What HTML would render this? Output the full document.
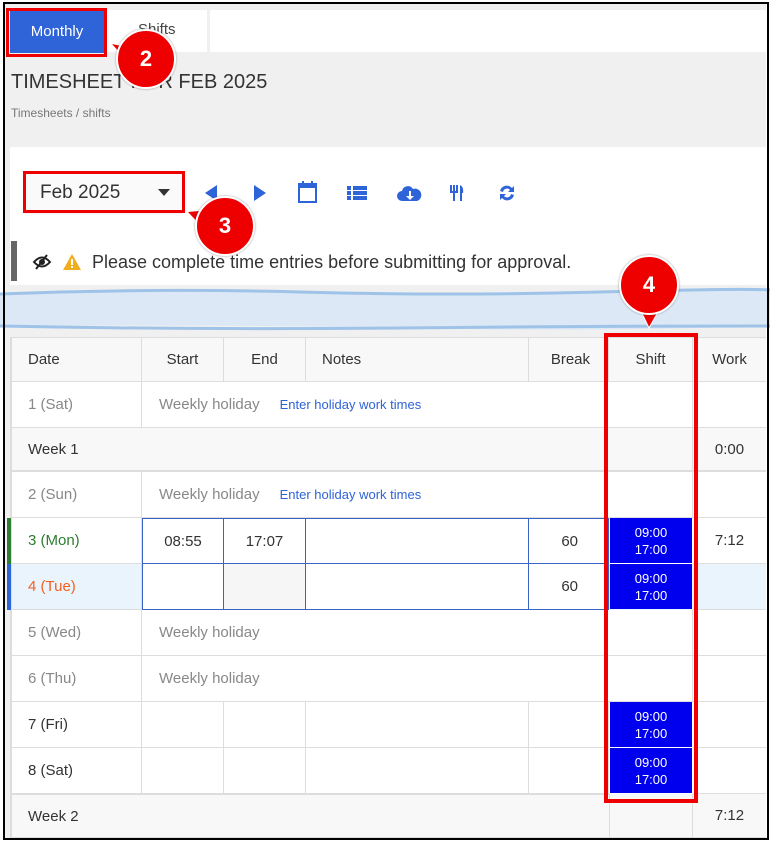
<!DOCTYPE html>
<html><head><meta charset="utf-8"><style>
*{margin:0;padding:0;box-sizing:border-box}
body{width:770px;height:841px;position:relative;overflow:hidden;background:#fff;font-family:"Liberation Sans",sans-serif;}
.a{position:absolute}
.cell{position:absolute;border-right:1px solid #ddd;border-bottom:1px solid #ddd;display:flex;align-items:center;font-size:15px;color:#333}
.mk{position:absolute;width:60px;height:60px;border-radius:50%;background:#e00;border:2px solid #fff;color:#fff;font-weight:bold;font-size:22px;display:flex;align-items:center;justify-content:center;box-shadow:0 0 2px rgba(0,0,0,.4)}
.sh{position:absolute;background:#0000ee;color:#fff;font-size:13px;text-align:center;line-height:17px;display:flex;flex-direction:column;justify-content:center}
</style></head><body>
<div class="a" style="left:5px;top:4px;width:761px;height:834px;background:#f0f0f0"></div>
<div class="a" style="left:10px;top:10px;width:756px;height:42px;background:#fff"></div>
<div class="a" style="left:207px;top:10px;width:3px;height:42px;background:#f0f0f0"></div>
<div class="a" style="left:10px;top:10px;width:94px;height:43px;background:#2f63d8;color:#fff;font-size:15px;display:flex;align-items:center;justify-content:center">Monthly</div>
<div class="a" style="left:6px;top:8px;width:101px;height:49px;border:3px solid #e00"></div>
<div class="a" style="left:138px;top:21px;font-size:15px;color:#444">Shifts</div>
<div class="a" style="left:11px;top:71px;font-size:20px;color:#333">TIMESHEET FOR FEB 2025</div>
<div class="a" style="left:11px;top:106px;font-size:12px;color:#777">Timesheets / shifts</div>
<div class="a" style="left:10px;top:147px;width:756px;height:138px;background:#fff"></div>
<div class="a" style="left:25px;top:173px;width:158px;height:38px;background:#fafafa;box-shadow:0 1px 3px rgba(0,0,0,.3)"></div>
<div class="a" style="left:40px;top:182px;font-size:19px;color:#333">Feb 2025</div>
<div class="a" style="left:158px;top:189px;width:0;height:0;border-left:6px solid transparent;border-right:6px solid transparent;border-top:7px solid #333"></div>
<div class="a" style="left:23px;top:171px;width:162px;height:42px;border:3px solid #e00"></div>
<svg class="a" style="left:200px;top:180px" width="330" height="28" viewBox="200 180 330 28">
<g fill="#2f63d8">
<polygon points="217,185 217,201 205,193"/>
<polygon points="254,185 254,201 266,193"/>
<rect x="299" y="184" width="17" height="18" fill="none" stroke="#2f63d8" stroke-width="2"/><rect x="299" y="184" width="17" height="4"/><rect x="302" y="181" width="2" height="5"/><rect x="311" y="181" width="2" height="5"/>
<rect x="347" y="186" width="4" height="4"/><rect x="353" y="186" width="14" height="4"/><rect x="347" y="191" width="4" height="4"/><rect x="353" y="191" width="14" height="4"/><rect x="347" y="196" width="4" height="4"/><rect x="353" y="196" width="14" height="4"/>
<path d="M402 201 a5 5 0 0 1 0-10 a6 6 0 0 1 11-2 a5 5 0 0 1 4 12z"/>
<path d="M409 191v5h-3l4 4 4-4h-3v-5z" fill="#fff"/>
<rect x="450" y="185" width="2" height="7"/><rect x="453" y="185" width="2" height="7"/><rect x="456" y="185" width="2" height="7"/><rect x="450" y="191" width="8" height="2"/><rect x="453" y="191" width="2" height="10"/>
<path d="M460 185 q4 2 3 8 h-1 v8 h-2z"/>
<path d="M500 191 a7 7 0 0 1 12-3 l2-2 v6 h-6 l2-2 a4 4 0 0 0-7 2z"/>
<path d="M514 195 a7 7 0 0 1-12 3 l-2 2 v-6 h6 l-2 2 a4 4 0 0 0 7-2z"/>
</g></svg>
<div class="a" style="left:11px;top:241px;width:6px;height:40px;background:#666"></div>
<svg class="a" style="left:32px;top:253px" width="20" height="18" viewBox="0 0 20 18"><path d="M2 9 q8-9 16 0 q-8 9-16 0z" fill="none" stroke="#222" stroke-width="2"/><circle cx="10" cy="9" r="3" fill="#222"/><path d="M4 16 L15 2" stroke="#222" stroke-width="2"/></svg>
<svg class="a" style="left:62px;top:253px" width="20" height="18" viewBox="0 0 20 18"><path d="M10 1 L19 17 H1z" fill="#f0ad1e"/><rect x="9" y="6" width="2" height="6" fill="#fff"/><rect x="9" y="13" width="2" height="2" fill="#fff"/></svg>
<div class="a" style="left:92px;top:252px;font-size:18px;color:#333">Please complete time entries before submitting for approval.</div>
<svg class="a" style="left:0;top:282px" width="770" height="52"><path d="M0 12 Q150 6 300 10 T600 10 T770 8 V44 Q600 50 400 46 T0 44Z" fill="#dce8f5"/><path d="M0 12 Q150 6 300 10 T600 10 T770 8" fill="none" stroke="#9fc3e8" stroke-width="3"/><path d="M0 44 Q200 48 400 46 T770 44" fill="none" stroke="#9fc3e8" stroke-width="3"/></svg>
<div class="a" style="left:10px;top:337px;width:756px;height:501px;background:#fff;border-left:2px solid #ddd;border-top:2px solid #ddd"></div>
<div class="cell" style="left:12px;top:338px;width:130px;height:44px;padding-left:16px;background:#f8f8f8">Date</div>
<div class="cell" style="left:142px;top:338px;width:82px;height:44px;justify-content:center;background:#f8f8f8">Start</div>
<div class="cell" style="left:224px;top:338px;width:82px;height:44px;justify-content:center;background:#f8f8f8">End</div>
<div class="cell" style="left:306px;top:338px;width:223px;height:44px;padding-left:16px;background:#f8f8f8">Notes</div>
<div class="cell" style="left:529px;top:338px;width:80px;height:44px;justify-content:flex-end;padding-right:18px;background:#f8f8f8">Break</div>
<div class="cell" style="left:609px;top:338px;width:84px;height:44px;justify-content:center;background:#f8f8f8">Shift</div>
<div class="cell" style="left:693px;top:338px;width:73px;height:44px;justify-content:center;background:#f8f8f8;border-right:0">Work</div>
<div class="cell" style="left:12px;top:382px;width:130px;height:46px;padding-left:16px;color:#888">1 (Sat)</div>
<div class="cell" style="left:142px;top:382px;width:467px;height:46px;padding-left:17px;color:#888;border-right:0">Weekly holiday<span style="color:#2f63d8;font-size:13px;margin-left:20px">Enter holiday work times</span></div>
<div class="cell" style="left:609px;top:382px;width:84px;height:46px"></div>
<div class="cell" style="left:693px;top:382px;width:73px;height:46px;border-right:0"></div>
<div class="cell" style="left:12px;top:428px;width:597px;height:44px;padding-left:16px;background:#f8f8f8;border-right:0;border-bottom:2px solid #ddd">Week 1</div>
<div class="cell" style="left:609px;top:428px;width:84px;height:44px;background:#f8f8f8;border-bottom:2px solid #ddd"></div>
<div class="cell" style="left:693px;top:428px;width:73px;height:44px;justify-content:center;background:#f8f8f8;border-right:0;border-bottom:2px solid #ddd">0:00</div>
<div class="cell" style="left:12px;top:472px;width:130px;height:46px;padding-left:16px;color:#888">2 (Sun)</div>
<div class="cell" style="left:142px;top:472px;width:467px;height:46px;padding-left:17px;color:#888;border-right:0">Weekly holiday<span style="color:#2f63d8;font-size:13px;margin-left:20px">Enter holiday work times</span></div>
<div class="cell" style="left:609px;top:472px;width:84px;height:46px"></div>
<div class="cell" style="left:693px;top:472px;width:73px;height:46px;border-right:0"></div>
<div class="a" style="left:7px;top:518px;width:4px;height:46px;background:#2e7d32"></div>
<div class="cell" style="left:12px;top:518px;width:130px;height:46px;padding-left:16px;color:#2e7d32">3 (Mon)</div>
<div class="cell" style="left:142px;top:518px;width:82px;height:46px;justify-content:center;border:1px solid #3a63c8">08:55</div>
<div class="cell" style="left:223px;top:518px;width:83px;height:46px;justify-content:center;border:1px solid #3a63c8">17:07</div>
<div class="cell" style="left:305px;top:518px;width:224px;height:46px;border:1px solid #3a63c8"></div>
<div class="cell" style="left:528px;top:518px;width:81px;height:46px;justify-content:flex-end;padding-right:30px;border:1px solid #3a63c8">60</div>
<div class="sh" style="left:610px;top:518px;width:82px;height:45px"><div>09:00</div><div>17:00</div></div>
<div class="cell" style="left:693px;top:518px;width:73px;height:46px;justify-content:center;border-right:0">7:12</div>
<div class="a" style="left:12px;top:564px;width:754px;height:46px;background:#eaf4fd"></div>
<div class="a" style="left:7px;top:564px;width:4px;height:46px;background:#2f63d8"></div>
<div class="cell" style="left:12px;top:564px;width:130px;height:46px;padding-left:16px;color:#f06022">4 (Tue)</div>
<div class="cell" style="left:142px;top:563px;width:82px;height:47px;background:#fff;border:1px solid #3a63c8"></div>
<div class="cell" style="left:223px;top:563px;width:83px;height:47px;background:#f6f6f6;border:1px solid #3a63c8"></div>
<div class="cell" style="left:305px;top:563px;width:224px;height:47px;background:#fff;border:1px solid #3a63c8"></div>
<div class="cell" style="left:528px;top:563px;width:81px;height:47px;justify-content:flex-end;padding-right:30px;background:#fff;border:1px solid #3a63c8">60</div>
<div class="sh" style="left:610px;top:564px;width:82px;height:45px"><div>09:00</div><div>17:00</div></div>
<div class="cell" style="left:693px;top:564px;width:73px;height:46px;border-right:0"></div>
<div class="cell" style="left:12px;top:610px;width:130px;height:46px;padding-left:16px;color:#888">5 (Wed)</div>
<div class="cell" style="left:142px;top:610px;width:467px;height:46px;padding-left:17px;color:#888;border-right:0">Weekly holiday</div>
<div class="cell" style="left:609px;top:610px;width:84px;height:46px"></div>
<div class="cell" style="left:693px;top:610px;width:73px;height:46px;border-right:0"></div>
<div class="cell" style="left:12px;top:656px;width:130px;height:46px;padding-left:16px;color:#888">6 (Thu)</div>
<div class="cell" style="left:142px;top:656px;width:467px;height:46px;padding-left:17px;color:#888;border-right:0">Weekly holiday</div>
<div class="cell" style="left:609px;top:656px;width:84px;height:46px"></div>
<div class="cell" style="left:693px;top:656px;width:73px;height:46px;border-right:0"></div>
<div class="cell" style="left:12px;top:702px;width:130px;height:46px;padding-left:16px">7 (Fri)</div>
<div class="cell" style="left:142px;top:702px;width:82px;height:46px"></div>
<div class="cell" style="left:224px;top:702px;width:82px;height:46px"></div>
<div class="cell" style="left:306px;top:702px;width:223px;height:46px"></div>
<div class="cell" style="left:529px;top:702px;width:80px;height:46px"></div>
<div class="sh" style="left:610px;top:702px;width:82px;height:45px"><div>09:00</div><div>17:00</div></div>
<div class="cell" style="left:693px;top:702px;width:73px;height:46px;border-right:0"></div>
<div class="cell" style="left:12px;top:748px;width:130px;height:46px;padding-left:16px">8 (Sat)</div>
<div class="cell" style="left:142px;top:748px;width:82px;height:46px"></div>
<div class="cell" style="left:224px;top:748px;width:82px;height:46px"></div>
<div class="cell" style="left:306px;top:748px;width:223px;height:46px"></div>
<div class="cell" style="left:529px;top:748px;width:80px;height:46px"></div>
<div class="sh" style="left:610px;top:748px;width:82px;height:45px"><div>09:00</div><div>17:00</div></div>
<div class="cell" style="left:693px;top:748px;width:73px;height:46px;border-right:0"></div>
<div class="cell" style="left:12px;top:794px;width:597px;height:44px;padding-left:16px;background:#f8f8f8;border-right:0;border-top:1px solid #ddd">Week 2</div>
<div class="cell" style="left:609px;top:794px;width:84px;height:44px;background:#f8f8f8;border-left:1px solid #ddd"></div>
<div class="cell" style="left:693px;top:794px;width:73px;height:44px;justify-content:center;background:#f8f8f8;border-right:0">7:12</div>
<div class="a" style="left:604px;top:333px;width:94px;height:470px;border:4px solid #e00"></div>
<svg class="a" style="left:100px;top:30px" width="90" height="40"><polygon points="12,14 40,20 30,34" fill="#e00"/></svg>
<div class="mk" style="left:116px;top:29px">2</div>
<svg class="a" style="left:185px;top:205px" width="40" height="30"><polygon points="3,7 25,5 20,25" fill="#e00"/></svg>
<div class="mk" style="left:195px;top:196px">3</div>
<svg class="a" style="left:635px;top:300px" width="30" height="30"><polygon points="3,5 27,5 14,28" fill="#e00" stroke="#fff" stroke-width="1"/></svg>
<div class="mk" style="left:619px;top:255px">4</div>
<div class="a" style="left:3px;top:2px;width:766px;height:838px;border:2px solid #000"></div>
</body></html>
